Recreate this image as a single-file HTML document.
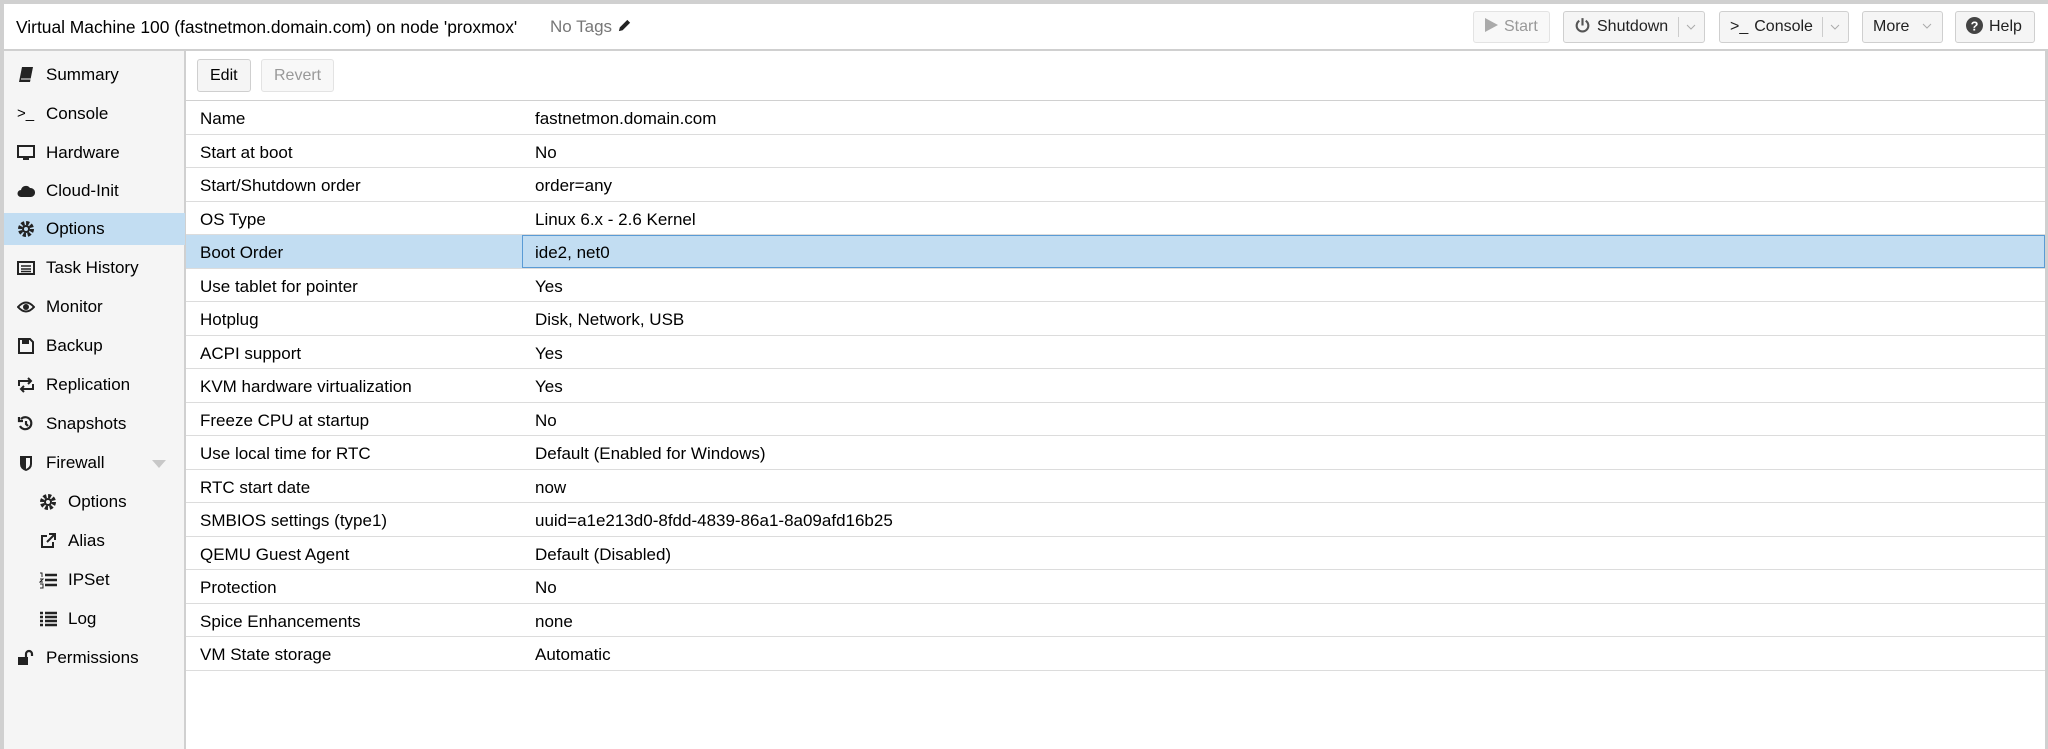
<!DOCTYPE html>
<html><head><meta charset="utf-8"><style>
*{box-sizing:border-box;margin:0;padding:0}
body{width:2048px;height:749px;overflow:hidden;background:#d0d0d0;font-family:"Liberation Sans",sans-serif;font-size:17px;color:#000;position:relative}
.hdr{position:absolute;left:4px;top:4px;right:0;height:46px;background:#fff;border-bottom:1px solid #cfcfcf}
.title{position:absolute;left:12px;top:13px;font-size:17.4px}
.tags{position:absolute;left:546px;top:13px;color:#777}
.btn{position:absolute;top:7px;height:32px;border:1px solid #cfcfcf;border-radius:3px;background:#f5f5f5;font-size:16px;line-height:30px;padding-left:10px;color:#222}
.btn .dd{position:absolute;right:0;top:5px;bottom:5px;width:26px;border-left:1px solid #ccc}
.chev{position:absolute;right:8px;top:7px}
.side{position:absolute;left:4px;top:51px;width:181px;bottom:0;background:#f5f5f5;border-right:1px solid #d0d0d0}
.it{position:absolute;left:0;width:181px;height:32px;line-height:32px}
.it .ic{position:absolute;left:13px;top:7px;width:18px;height:18px}
.it .tx{position:absolute;left:42px}
.it.sub .ic{left:35px}.it.sub .tx{left:64px}
.sel{background:#c2ddf2}
.main{position:absolute;left:186px;top:51px;right:3px;bottom:0;background:#fff}
.tb{height:50px;border-bottom:1px solid #d0d0d0;position:relative}
.tbtn{position:absolute;top:8px;height:33px;border:1px solid #cfcfcf;border-radius:3px;background:#f5f5f5;line-height:31px;padding:0 12px;font-size:16px}
.row{height:33.5px;border-bottom:1px solid #dcdcdc;position:relative;line-height:35px}
.row .k{position:absolute;left:14px}
.row .v{position:absolute;left:336px;padding-left:13px;top:0;bottom:0;right:0}
.row.s{background:#c2ddf2}
.row.s .v{border:1px solid #5a9bd5;line-height:33px;padding-left:12px}
</style></head><body>
<div class="hdr">
<div class="title">Virtual Machine 100 (fastnetmon.domain.com) on node 'proxmox'</div>
<div class="tags">No Tags <svg width="15" height="15" viewBox="0 0 16 16" style="vertical-align:-1px"><path d="M2 14l1-4 8-8 3 3-8 8z" fill="#222"/></svg></div>
<div class="btn" style="left:1469px;width:77px;color:#999;border-color:#e3e3e3;background:#f8f8f8"><svg width="14" height="14" viewBox="0 0 14 14" style="vertical-align:-1px;margin-right:6px"><path d="M1 0L14 7L1 14z" fill="#aaa"/></svg>Start</div>
<div class="btn" style="left:1559px;width:142px"><svg width="17" height="17" viewBox="0 0 16 16" style="vertical-align:-3px;margin-right:6px"><path d="M5 3.5A5.5 5.5 0 1 0 11 3.5M8 1v7" stroke="#555" stroke-width="2" fill="none"/></svg>Shutdown<span class="dd"><svg class="chev" width="10" height="6" viewBox="0 0 10 6"><path d="M1 1l4 4 4-4" stroke="#aaa" fill="none"/></svg></span></div>
<div class="btn" style="left:1715px;width:130px"><span style="margin-right:6px">&gt;_</span>Console<span class="dd"><svg class="chev" width="10" height="6" viewBox="0 0 10 6"><path d="M1 1l4 4 4-4" stroke="#aaa" fill="none"/></svg></span></div>
<div class="btn" style="left:1858px;width:81px">More <svg width="10" height="6" viewBox="0 0 10 6" style="margin-left:8px;vertical-align:2px"><path d="M1 1l4 4 4-4" stroke="#aaa" fill="none"/></svg></div>
<div class="btn" style="left:1951px;width:80px"><svg width="17" height="17" viewBox="0 0 16 16" style="vertical-align:-3px;margin-right:6px"><circle cx="8" cy="8" r="8" fill="#444"/><text x="8" y="12.5" font-size="12" font-weight="bold" fill="#fff" text-anchor="middle" font-family="Liberation Sans">?</text></svg>Help</div>
</div>
<div class="side">
<div class="it" style="top:8px"><svg class="ic" viewBox="0 0 18 18"><path d="M5 1h11l-3 15H2z" fill="#222"/><path d="M4 13h10" stroke="#f5f5f5"/></svg><span class="tx">Summary</span></div>
<div class="it" style="top:47px"><span class="ic" style="top:0;font-size:15px">&gt;_</span><span class="tx">Console</span></div>
<div class="it" style="top:86px"><svg class="ic" viewBox="0 0 18 18"><rect x="1" y="2" width="16" height="11" fill="none" stroke="#222" stroke-width="2"/><rect x="6" y="13" width="6" height="3" fill="#222"/></svg><span class="tx">Hardware</span></div>
<div class="it" style="top:124px"><svg class="ic" viewBox="0 0 18 18"><path d="M4 15a3.5 3.5 0 0 1 0-7a5 5 0 0 1 9-2a4.5 4.5 0 0 1 1 9z" fill="#222"/></svg><span class="tx">Cloud-Init</span></div>
<div class="it sel" style="top:162px"><svg class="ic" viewBox="0 0 18 18"><circle cx="9" cy="9" r="6" fill="none" stroke="#222" stroke-width="4" stroke-dasharray="3 1.7"/><circle cx="9" cy="9" r="4" fill="#222"/><circle cx="9" cy="9" r="2" fill="#c2ddf2"/></svg><span class="tx">Options</span></div>
<div class="it" style="top:201px"><svg class="ic" viewBox="0 0 18 18"><rect x="1" y="3" width="16" height="12" fill="none" stroke="#222" stroke-width="2"/><path d="M4 7h10M4 10h10M4 12.5h10" stroke="#222" stroke-width="1.5"/></svg><span class="tx">Task History</span></div>
<div class="it" style="top:240px"><svg class="ic" viewBox="0 0 18 18"><path d="M1 9q8-9 16 0q-8 9-16 0z" fill="none" stroke="#222" stroke-width="2"/><circle cx="9" cy="9" r="3" fill="#222"/></svg><span class="tx">Monitor</span></div>
<div class="it" style="top:279px"><svg class="ic" viewBox="0 0 18 18"><path d="M2 2h11l3 3v11H2z" fill="none" stroke="#222" stroke-width="2"/><rect x="5" y="3" width="7" height="4" fill="#222"/></svg><span class="tx">Backup</span></div>
<div class="it" style="top:318px"><svg class="ic" viewBox="0 0 18 18"><path d="M2 10V5h12M11 2l3 3-3 3M16 8v5H4M7 16l-3-3 3-3" fill="none" stroke="#222" stroke-width="2"/></svg><span class="tx">Replication</span></div>
<div class="it" style="top:357px"><svg class="ic" viewBox="0 0 18 18"><path d="M4 4a6 6 0 1 1-1 7M2 2v4h4M9 6v3l2 2" fill="none" stroke="#222" stroke-width="2.2"/></svg><span class="tx">Snapshots</span></div>
<div class="it" style="top:396px"><svg class="ic" viewBox="0 0 18 18"><path d="M3 2h12v8q0 5-6 7q-6-2-6-7z" fill="#222"/><path d="M9 4h4v6q0 3-4 5z" fill="#f5f5f5"/></svg><span class="tx">Firewall</span><svg style="position:absolute;left:148px;top:13px" width="14" height="8" viewBox="0 0 14 8"><path d="M0 0h14L7 8z" fill="#c8c8c8"/></svg></div>
<div class="it sub" style="top:435px"><svg class="ic" viewBox="0 0 18 18"><circle cx="9" cy="9" r="6" fill="none" stroke="#222" stroke-width="4" stroke-dasharray="3 1.7"/><circle cx="9" cy="9" r="4" fill="#222"/><circle cx="9" cy="9" r="2" fill="#f5f5f5"/></svg><span class="tx">Options</span></div>
<div class="it sub" style="top:474px"><svg class="ic" viewBox="0 0 18 18"><path d="M8 4H3v11h11v-5M10 2h6v6M16 2l-8 8" fill="none" stroke="#222" stroke-width="2"/></svg><span class="tx">Alias</span></div>
<div class="it sub" style="top:513px"><svg class="ic" viewBox="0 0 18 18"><path d="M6 4h12M6 9h12M6 14h12" stroke="#222" stroke-width="2.5"/><path d="M1 2h2v4M1 8h3l-3 3h3M1 13h3v4H1" stroke="#222" stroke-width="1" fill="none"/></svg><span class="tx">IPSet</span></div>
<div class="it sub" style="top:552px"><svg class="ic" viewBox="0 0 18 18"><path d="M1 3h3M6 3h12M1 7h3M6 7h12M1 11h3M6 11h12M1 15h3M6 15h12" stroke="#222" stroke-width="2.5"/></svg><span class="tx">Log</span></div>
<div class="it" style="top:591px"><svg class="ic" viewBox="0 0 18 18"><rect x="1" y="8" width="10" height="8" fill="#222"/><path d="M9 8V5a3 3 0 0 1 6 0v2" fill="none" stroke="#222" stroke-width="2.2"/></svg><span class="tx">Permissions</span></div>
</div>
<div class="main">
<div class="tb"><div class="tbtn" style="left:11px">Edit</div><div class="tbtn" style="left:75px;color:#999;background:#f8f8f8;border-color:#e3e3e3">Revert</div></div>
<div class="row"><span class="k">Name</span><span class="v">fastnetmon.domain.com</span></div>
<div class="row"><span class="k">Start at boot</span><span class="v">No</span></div>
<div class="row"><span class="k">Start/Shutdown order</span><span class="v">order=any</span></div>
<div class="row"><span class="k">OS Type</span><span class="v">Linux 6.x - 2.6 Kernel</span></div>
<div class="row s"><span class="k">Boot Order</span><span class="v">ide2, net0</span></div>
<div class="row"><span class="k">Use tablet for pointer</span><span class="v">Yes</span></div>
<div class="row"><span class="k">Hotplug</span><span class="v">Disk, Network, USB</span></div>
<div class="row"><span class="k">ACPI support</span><span class="v">Yes</span></div>
<div class="row"><span class="k">KVM hardware virtualization</span><span class="v">Yes</span></div>
<div class="row"><span class="k">Freeze CPU at startup</span><span class="v">No</span></div>
<div class="row"><span class="k">Use local time for RTC</span><span class="v">Default (Enabled for Windows)</span></div>
<div class="row"><span class="k">RTC start date</span><span class="v">now</span></div>
<div class="row"><span class="k">SMBIOS settings (type1)</span><span class="v">uuid=a1e213d0-8fdd-4839-86a1-8a09afd16b25</span></div>
<div class="row"><span class="k">QEMU Guest Agent</span><span class="v">Default (Disabled)</span></div>
<div class="row"><span class="k">Protection</span><span class="v">No</span></div>
<div class="row"><span class="k">Spice Enhancements</span><span class="v">none</span></div>
<div class="row"><span class="k">VM State storage</span><span class="v">Automatic</span></div>
</div>
</body></html>
